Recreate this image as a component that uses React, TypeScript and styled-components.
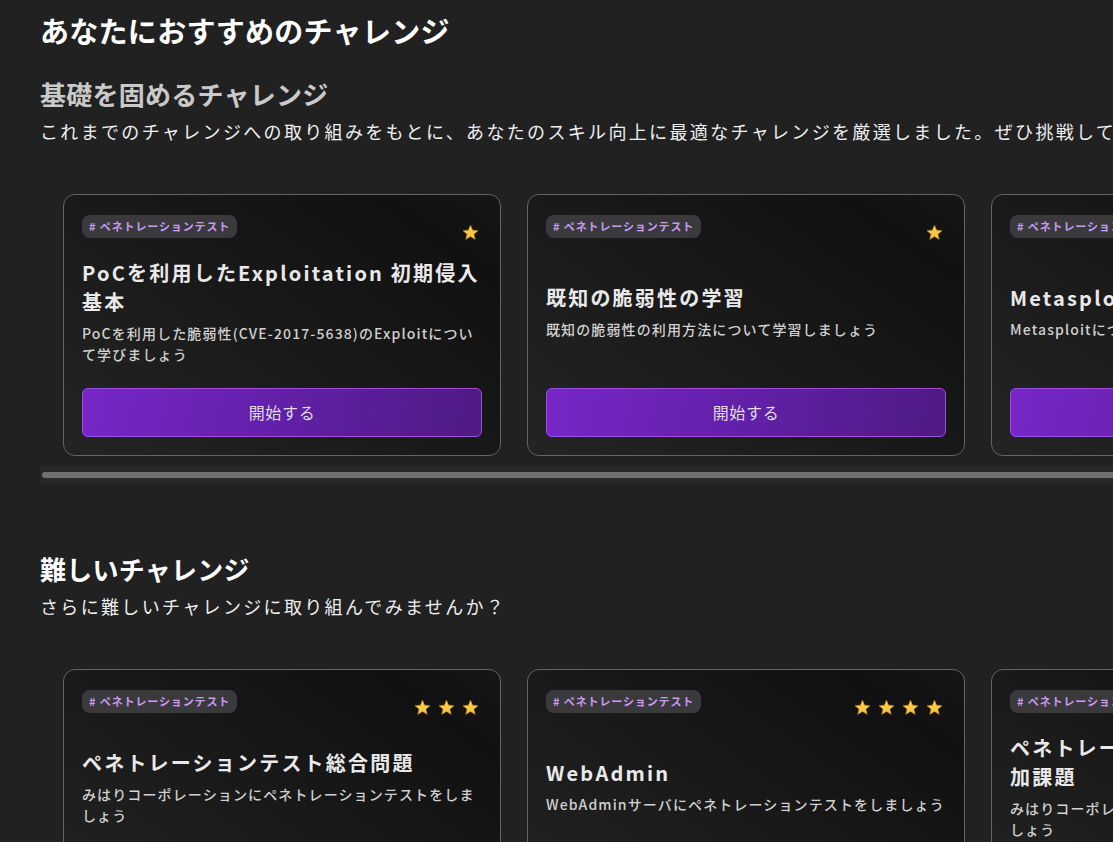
import React from "react";
import styled, { createGlobalStyle } from "styled-components";

const GlobalStyle = createGlobalStyle`
  html, body {
    margin: 0;
    padding: 0;
    background: #212121;
    overflow: hidden;
  }
  body {
    font-family: "Noto Sans CJK JP", "Noto Sans", sans-serif;
    color: #ffffff;
  }
`;

const Page = styled.main`
  width: 1600px;
  padding: 12px 0 0 40px;
  box-sizing: border-box;
`;

const PageTitle = styled.h1`
  margin: 0;
  font-size: 29px;
  line-height: 36px;
  font-weight: 700;
  letter-spacing: 0.01em;
  color: #ffffff;
`;

const Section = styled.section<{ $top: number }>`
  margin-top: ${(p) => p.$top}px;
  display: flex;
  flex-direction: column;
`;

const SectionTitle = styled.h2<{ $muted?: boolean }>`
  margin: 0;
  font-size: 26px;
  line-height: 34px;
  font-weight: 700;
  letter-spacing: 0.01em;
  color: ${(p) => (p.$muted ? "#c9c9c9" : "#ffffff")};
`;

const SectionLead = styled.p`
  margin: 7px 0 0;
  font-size: 18px;
  line-height: 26px;
  letter-spacing: 0.13em;
  color: #efefef;
  white-space: nowrap;
`;

const Carousel = styled.div`
  margin-top: 50px;
  display: flex;
  flex-direction: column;
`;

const CardRow = styled.div`
  display: flex;
  gap: 26px;
  padding-left: 23px;
`;

const Card = styled.article`
  flex: 0 0 438px;
  height: 262px;
  box-sizing: border-box;
  padding: 20px 18px 18px 18px;
  border: 1px solid #646464;
  border-radius: 12px;
  background: linear-gradient(35deg, #242424 0%, #1a1a1a 45%, #111111 85%, #161616 100%);
  display: flex;
  flex-direction: column;
`;

const CardHeader = styled.div`
  display: flex;
  justify-content: space-between;
  align-items: flex-start;
`;

const Tag = styled.span`
  height: 23px;
  padding: 0 7px;
  border-radius: 8px;
  background: #3a3a3c;
  color: #c99cf3;
  font-size: 11px;
  font-weight: 700;
  line-height: 23px;
  letter-spacing: 0.08em;
  white-space: nowrap;
`;

const Stars = styled.div`
  margin-top: 9px;
  margin-right: 3px;
  display: flex;
  gap: 7px;
`;

const CardBody = styled.div`
  flex: 1;
  display: flex;
  flex-direction: column;
  justify-content: center;
  padding-bottom: 6px;
`;

const CardTitle = styled.h3`
  margin: 0;
  font-size: 20px;
  line-height: 29px;
  font-weight: 700;
  letter-spacing: 0.11em;
  color: #e9e9e9;
  white-space: pre-line;
`;

const CardDesc = styled.p`
  margin: 7px 0 0;
  font-size: 14px;
  line-height: 21px;
  font-weight: 500;
  letter-spacing: 0.08em;
  color: #d0d0d0;
`;

const StartButton = styled.button`
  height: 49px;
  width: 100%;
  box-sizing: border-box;
  border: 1px solid #9c4fe2;
  border-radius: 6px;
  background: linear-gradient(100deg, #7727c6 0%, #6220a8 50%, #4e1a82 100%);
  color: #dedede;
  font-family: inherit;
  font-size: 16px;
  line-height: 1;
  letter-spacing: 0.04em;
  padding-bottom: 2px;
  cursor: pointer;
`;

const ScrollTrack = styled.div`
  margin-top: 10px;
  height: 18px;
  background: #272727;
  display: flex;
  align-items: center;
  padding-left: 2px;
`;

const ScrollThumb = styled.div`
  flex: 1;
  height: 6px;
  border-radius: 3px;
  background: #707070;
`;

const Star = () => (
  <svg width="17" height="17" viewBox="0 0 24 24" aria-hidden="true">
    <path
      d="M12 1.8l3 7 7.5.6-5.7 4.9 1.8 7.4L12 17.7l-6.6 4 1.8-7.4L1.5 9.4 9 8.8z"
      fill="#f7c745"
      stroke="#c99a1e"
      strokeWidth="0.8"
      strokeLinejoin="round"
    />
  </svg>
);

type Challenge = { title: string; desc: string; stars: number };

const basics: Challenge[] = [
  {
    title: "PoCを利用したExploitation 初期侵入基本",
    desc: "PoCを利用した脆弱性(CVE-2017-5638)のExploitについて学びましょう",
    stars: 1,
  },
  { title: "既知の脆弱性の学習", desc: "既知の脆弱性の利用方法について学習しましょう", stars: 1 },
  { title: "Metasploitの基本", desc: "Metasploitについて学習しましょう", stars: 1 },
];

const hard: Challenge[] = [
  {
    title: "ペネトレーションテスト総合問題",
    desc: "みはりコーポレーションにペネトレーションテストをしましょう",
    stars: 3,
  },
  { title: "WebAdmin", desc: "WebAdminサーバにペネトレーションテストをしましょう", stars: 4 },
  {
    title: "ペネトレーションテスト総合問題の追\n加課題",
    desc: "みはりコーポレーションにペネトレーションテストをしましょう",
    stars: 3,
  },
];

const ChallengeCard = ({ c }: { c: Challenge }) => (
  <Card>
    <CardHeader>
      <Tag># ペネトレーションテスト</Tag>
      <Stars>
        {Array.from({ length: c.stars }).map((_, i) => (
          <Star key={i} />
        ))}
      </Stars>
    </CardHeader>
    <CardBody>
      <CardTitle>{c.title}</CardTitle>
      <CardDesc>{c.desc}</CardDesc>
    </CardBody>
    <StartButton>開始する</StartButton>
  </Card>
);

export default function App() {
  return (
    <>
      <GlobalStyle />
      <Page>
        <PageTitle>あなたにおすすめのチャレンジ</PageTitle>
        <Section $top={29}>
          <SectionTitle $muted>基礎を固めるチャレンジ</SectionTitle>
          <SectionLead>
            これまでのチャレンジへの取り組みをもとに、あなたのスキル向上に最適なチャレンジを厳選しました。ぜひ挑戦してみてください。
          </SectionLead>
          <Carousel>
            <CardRow>
              {basics.map((c) => (
                <ChallengeCard key={c.title} c={c} />
              ))}
            </CardRow>
            <ScrollTrack>
              <ScrollThumb />
            </ScrollTrack>
          </Carousel>
        </Section>
        <Section $top={68}>
          <SectionTitle>難しいチャレンジ</SectionTitle>
          <SectionLead>さらに難しいチャレンジに取り組んでみませんか？</SectionLead>
          <Carousel>
            <CardRow>
              {hard.map((c) => (
                <ChallengeCard key={c.title} c={c} />
              ))}
            </CardRow>
          </Carousel>
        </Section>
      </Page>
    </>
  );
}
